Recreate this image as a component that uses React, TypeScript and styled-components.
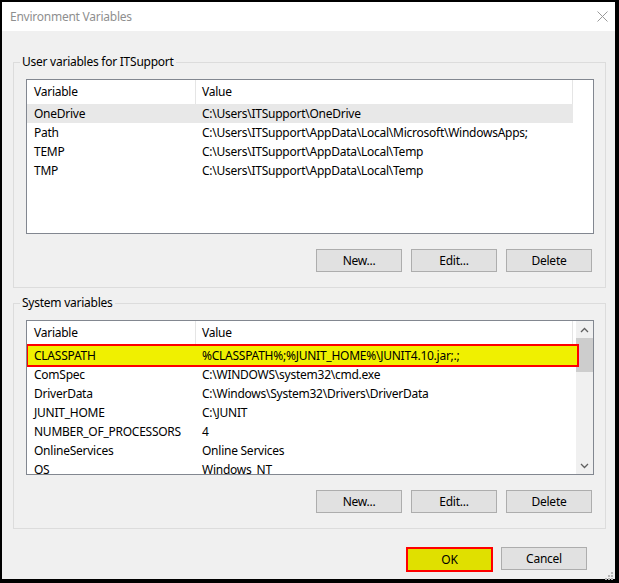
import React from 'react'
import styled, { createGlobalStyle } from 'styled-components'

const GlobalStyle = createGlobalStyle`
  html, body {
    margin: 0;
    padding: 0;
    background: #000;
  }
  body {
    font-family: 'Noto Sans', 'Liberation Sans', sans-serif;
    font-size: 12px;
    letter-spacing: -0.25px;
    color: #000;
  }
`

const Screen = styled.div`
  width: 619px;
  height: 583px;
  padding: 2px 4px 4px 2px;
  box-sizing: border-box;
  background: #000;
`

const Window = styled.div`
  position: relative;
  width: 613px;
  height: 577px;
  background: #f0f0f0;
  display: flex;
  flex-direction: column;
`

const TitleBar = styled.div`
  height: 29px;
  background: #fff;
  display: flex;
  align-items: center;
  justify-content: space-between;
  padding: 0 1px 0 8px;
  flex-shrink: 0;
`

const Title = styled.span`
  color: #8f8f8f;
  font-size: 12px;
`

const CloseButton = styled.div`
  width: 24px;
  height: 24px;
  display: flex;
  align-items: center;
  justify-content: center;
  margin-top: -1px;
`

const Body = styled.div`
  padding: 23px 9px 0 11px;
  display: flex;
  flex-direction: column;
  gap: 7px;
`

const Group = styled.fieldset`
  margin: 0;
  padding: 0 11px 15px 12px;
  border: 1px solid #dcdcdc;
  min-width: 0;
`

const Legend = styled.legend`
  padding: 0 2px;
  margin-left: -6px;
  line-height: 16px;
  height: 16px;
`

const ListBox = styled.div`
  margin-top: 9px;
  height: 155px;
  box-sizing: border-box;
  border: 1px solid #828790;
  background: #fff;
  display: flex;
  overflow: hidden;
`

const ListInner = styled.div`
  width: 546px;
  flex-shrink: 0;
  display: flex;
  flex-direction: column;
`

const HeaderRow = styled.div`
  height: 24px;
  display: grid;
  grid-template-columns: 168px 1px 1fr 1px;
  align-items: stretch;
  flex-shrink: 0;
`

const HeaderCell = styled.div<{ $first?: boolean }>`
  display: flex;
  align-items: center;
  padding-left: ${p => (p.$first ? 7 : 6)}px;
  padding-bottom: 1px;
`

const Divider = styled.div`
  background: #e5e5e5;
`

const Row = styled.div<{ $variant?: 'hover' | 'marked' }>`
  position: relative;
  height: ${p => (p.$variant === 'marked' ? 23 : 19)}px;
  box-sizing: border-box;
  display: grid;
  grid-template-columns: ${p => (p.$variant === 'marked' ? 168 : 169)}px 1fr;
  align-items: center;
  flex-shrink: 0;
  white-space: nowrap;
  background: ${p =>
    p.$variant === 'hover' ? '#e8e8e8' : p.$variant === 'marked' ? '#f0f000' : 'transparent'};
  ${p =>
    p.$variant === 'marked' &&
    `
    border: 2px solid #ff0000;
    margin: -1px 0 -2px -1px;
    width: 553px;
    z-index: 2;
  `}
`

const Cell = styled.div<{ $first?: boolean; $shift?: number }>`
  padding-left: ${p => (p.$first ? 7 : 6) - (p.$shift ?? 0)}px;
  overflow: hidden;
  line-height: 19px;
`

const ScrollBar = styled.div`
  width: 17px;
  margin-left: auto;
  background: #f0f0f0;
  display: flex;
  flex-direction: column;
  align-items: center;
  flex-shrink: 0;
`

const ScrollArrow = styled.div`
  height: 17px;
  width: 17px;
  display: flex;
  align-items: center;
  justify-content: center;
`

const Thumb = styled.div`
  width: 17px;
  height: 34px;
  background: #cdcdcd;
`

const Track = styled.div`
  flex: 1;
`

const ButtonRow = styled.div<{ $gap: number }>`
  display: flex;
  justify-content: flex-end;
  gap: ${p => p.$gap}px;
  margin-top: 15px;
  padding-right: 2px;
`

const Button = styled.div<{ $marked?: boolean }>`
  width: ${p => (p.$marked ? 87 : 86)}px;
  height: ${p => (p.$marked ? 25 : 23)}px;
  box-sizing: border-box;
  border: ${p => (p.$marked ? '2px solid #ff0000' : '1px solid #adadad')};
  background: ${p => (p.$marked ? '#e0e000' : '#e1e1e1')};
  display: flex;
  align-items: center;
  justify-content: center;
  font-size: 12px;
  padding-bottom: 1px;
`

const DialogButtons = styled.div`
  display: flex;
  justify-content: flex-end;
  align-items: flex-start;
  gap: 8px;
  margin-top: 18px;
  padding-right: 28px;
`

const Grip = styled.div`
  position: absolute;
  right: 1px;
  bottom: 1px;
  width: 10px;
  height: 10px;
`

type Variable = { name: string; value: string; variant?: 'hover' | 'marked' }

const userVars: Variable[] = [
  { name: 'OneDrive', value: 'C:\\Users\\ITSupport\\OneDrive', variant: 'hover' },
  { name: 'Path', value: 'C:\\Users\\ITSupport\\AppData\\Local\\Microsoft\\WindowsApps;' },
  { name: 'TEMP', value: 'C:\\Users\\ITSupport\\AppData\\Local\\Temp' },
  { name: 'TMP', value: 'C:\\Users\\ITSupport\\AppData\\Local\\Temp' },
]

const systemVars: Variable[] = [
  { name: 'CLASSPATH', value: '%CLASSPATH%;%JUNIT_HOME%\\JUNIT4.10.jar;.;', variant: 'marked' },
  { name: 'ComSpec', value: 'C:\\WINDOWS\\system32\\cmd.exe' },
  { name: 'DriverData', value: 'C:\\Windows\\System32\\Drivers\\DriverData' },
  { name: 'JUNIT_HOME', value: 'C:\\JUNIT' },
  { name: 'NUMBER_OF_PROCESSORS', value: '4' },
  { name: 'OnlineServices', value: 'Online Services' },
  { name: 'OS', value: 'Windows_NT' },
]

const Chevron = ({ up }: { up?: boolean }) => (
  <svg width="9" height="6" viewBox="0 0 9 6">
    <path
      d={up ? 'M1 5 L4.5 1.5 L8 5' : 'M1 1 L4.5 4.5 L8 1'}
      fill="none"
      stroke="#606060"
      strokeWidth="1.3"
    />
  </svg>
)

const VariableList = ({ items, scroll }: { items: Variable[]; scroll?: boolean }) => (
  <ListBox>
    <ListInner>
      <HeaderRow>
        <HeaderCell $first>Variable</HeaderCell>
        <Divider />
        <HeaderCell>Value</HeaderCell>
        <Divider />
      </HeaderRow>
      {items.map(v => (
        <Row key={v.name} $variant={v.variant}>
          <Cell $first $shift={v.variant === 'marked' ? 1 : 0}>{v.name}</Cell>
          <Cell>{v.value}</Cell>
        </Row>
      ))}
    </ListInner>
    {scroll && (
      <ScrollBar>
        <ScrollArrow>
          <Chevron up />
        </ScrollArrow>
        <Thumb />
        <Track />
        <ScrollArrow>
          <Chevron />
        </ScrollArrow>
      </ScrollBar>
    )}
  </ListBox>
)

const ListButtons = () => (
  <ButtonRow $gap={9}>
    <Button>New...</Button>
    <Button>Edit...</Button>
    <Button>Delete</Button>
  </ButtonRow>
)

export default function App() {
  return (
    <>
      <GlobalStyle />
      <Screen>
        <Window>
          <TitleBar>
            <Title>Environment Variables</Title>
            <CloseButton>
              <svg width="11" height="11" viewBox="0 0 11 11">
                <path d="M0.5 0.5 L10.5 10.5 M10.5 0.5 L0.5 10.5" stroke="#9a9a9a" strokeWidth="1" />
              </svg>
            </CloseButton>
          </TitleBar>
          <Body>
            <Group>
              <Legend>User variables for ITSupport</Legend>
              <VariableList items={userVars} />
              <ListButtons />
            </Group>
            <Group>
              <Legend>System variables</Legend>
              <VariableList items={systemVars} scroll />
              <ListButtons />
            </Group>
          </Body>
          <DialogButtons>
            <Button $marked>OK</Button>
            <Button>Cancel</Button>
          </DialogButtons>
          <Grip>
            <svg width="10" height="10" viewBox="0 0 10 10" fill="#b8b8b8">
              <rect x="7" y="1" width="2" height="2" />
              <rect x="4" y="4" width="2" height="2" />
              <rect x="7" y="4" width="2" height="2" />
              <rect x="1" y="7" width="2" height="2" />
              <rect x="4" y="7" width="2" height="2" />
              <rect x="7" y="7" width="2" height="2" />
            </svg>
          </Grip>
        </Window>
      </Screen>
    </>
  )
}
